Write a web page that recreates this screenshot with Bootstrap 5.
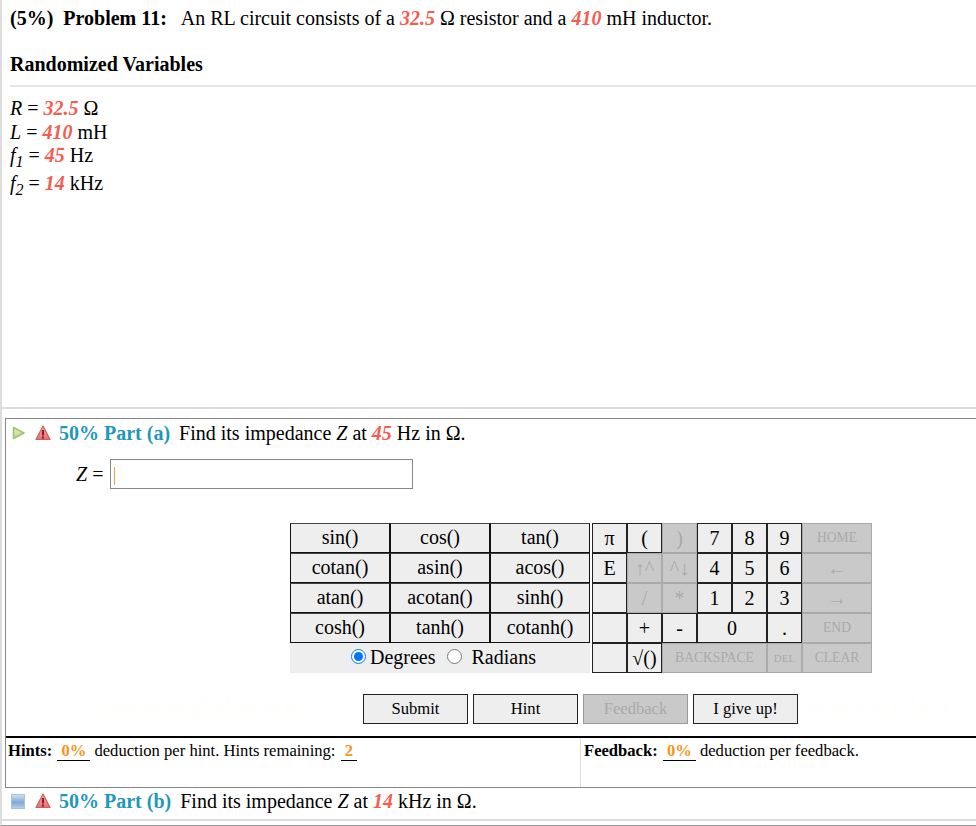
<!DOCTYPE html>
<html lang="en">
<head>
<meta charset="utf-8">
<title>Problem 11</title>
<link rel="stylesheet" href="https://cdn.jsdelivr.net/npm/bootstrap@5.3.0/dist/css/bootstrap.min.css">
<style>
html,body{height:826px;overflow:hidden;background:#fff}
body{font-family:"Liberation Serif","Times New Roman",serif;color:#000;font-size:20px;line-height:1.15}
.sheet{width:976px;height:826px;border-left:2px solid #ddd;border-bottom:1px solid #999;display:flex;flex-direction:column}
.prob{height:409px;border-bottom:2px solid #ddd;padding:6px 0 0 8px;flex:none}
.qline{font-size:20px;line-height:24px}
.qline b{margin-right:5px}
.qline b+b{margin-right:10px}
.rv{color:#f65c50;font-weight:bold;font-style:italic}
.vhead{font-weight:bold;font-size:20px;line-height:24px;margin-top:22px;padding-bottom:9px;border-bottom:2px solid #e6e6e6}
.vars{margin-top:9px;font-size:20px}
.vline{height:24px;line-height:24px;white-space:nowrap}
.vline.mid{height:23px;line-height:23px}
.vline.tall{height:32px;line-height:32px}
.vline sub{font-size:16px;font-style:italic;bottom:-.3em;margin-left:0}
.part{margin:9px 0 0 3px;border:1px solid #888;border-right:0;height:370px;flex:none;display:flex;flex-direction:column}
.phead{display:flex;align-items:center;height:28px;padding-left:6px;white-space:nowrap}
.phead svg{flex:none}
.ico1{margin-right:10px}
.ptitle{color:#1f98bb;font-weight:bold;margin:0 9px 0 8px}
.ansrow{display:flex;align-items:center;margin-top:12px;height:30px;padding-left:70px}
.anslabel{margin-right:7px}
.answrap{position:relative}
.ansbox{display:block;width:303px;height:30px;border:1px solid #888;background:#fff;padding:0;border-radius:0}
.caret-bar{position:absolute;left:4px;top:8px;width:1px;height:18px;background:#f0a050}
.calc{display:flex;margin:34px 0 0 284px;gap:2px}
.fnpad{display:grid;grid-template-columns:repeat(3,100px);grid-auto-rows:30px;background:#eee}
.numpad{display:grid;grid-template-columns:repeat(6,35px) 70px;grid-auto-rows:30px}
.key{display:flex;align-items:center;justify-content:center;background:#eee;border:1px solid #222;margin:0;padding:0;color:#000;font-size:20px;line-height:1;border-radius:0;white-space:nowrap}
.fnpad .key{border-color:#444 #111 #111 #111;padding-bottom:2px}
.key.off{background:#c9c9c9;border-color:#aaa;color:#aaa}
.key.sm{font-size:13.6px}
.key.xs{font-size:11px}
.key.w2{grid-column:span 2}
.key.w3{grid-column:span 3}
.radios{grid-column:span 3;display:flex;align-items:center;padding:0 0 2px 61px;font-size:20px}
.radios input{margin:0 4px 2px 0;width:15px;height:15px;flex:none}
.radios #rad{margin-left:11px;margin-right:10px}
.actions{display:flex;gap:5px;margin:21px 0 0 357px;position:relative}
.actbtn{width:105px;height:30px;background:#eee;border:1px solid #222;font-size:16.6px;padding:0;line-height:1;border-radius:0;color:#000}
.actbtn.off{background:#c9c9c9;border-color:#999;color:#aaa}
.ghost{position:absolute;top:-4px;font-size:27px;line-height:30px;color:#fefefa;white-space:nowrap}
.ghost.a{right:100%;margin-right:60px}
.ghost.b{left:445px;font-size:24px}
.infobar{margin-top:12px;border-top:2px solid #000;flex:1;display:flex;font-size:16.6px;line-height:20px}
.infocol{padding:3px 0 0 2px}
.infocol.l{width:575px;border-right:1px solid #ddd}
.infocol.r{padding-left:3px}
.dash{display:inline-block;color:#f7941d;font-weight:bold;border-bottom:1px solid #000;padding:0 4px;margin:0 0 0 1px;line-height:19px}
.phead.b{height:26px;margin:0 0 0 9px;padding-left:0;flex:none}
.foot{margin-top:5px;border-top:2px solid #ddd;flex:none}
</style>
</head>
<body>
<div class="sheet">
  <section class="prob">
    <div class="qline"><b>(5%)</b> <b>Problem 11:</b> An RL circuit consists of a <span class="rv">32.5</span> Ω resistor and a <span class="rv">410</span> mH inductor.</div>
    <div class="vhead">Randomized Variables</div>
    <div class="vars">
      <div class="vline"><i>R</i> = <span class="rv">32.5</span> Ω</div>
      <div class="vline"><i>L</i> = <span class="rv">410</span> mH</div>
      <div class="vline mid"><i>f</i><sub>1</sub> = <span class="rv">45</span> Hz</div>
      <div class="vline tall"><i>f</i><sub>2</sub> = <span class="rv">14</span> kHz</div>
    </div>
  </section>

  <section class="part">
    <div class="phead">
      <svg class="ico1" width="13" height="14" viewBox="0 0 13 14" aria-hidden="true"><defs><linearGradient id="g1" x1="0" y1="0" x2="0" y2="1"><stop offset="0" stop-color="#e6f0c4"/><stop offset="1" stop-color="#b4d68a"/></linearGradient></defs><path d="M1.5 1.5 L12 7 L1.5 12.5 Z" fill="url(#g1)" stroke="#a3c070" stroke-width="1.6" stroke-linejoin="round"/></svg>
      <svg width="16" height="16" viewBox="0 0 16 16" aria-hidden="true"><defs><linearGradient id="w1" x1="0" y1="0" x2="0" y2="1"><stop offset="0" stop-color="#f9b4b4"/><stop offset="1" stop-color="#ec6c6c"/></linearGradient></defs><path d="M8 1 L15 14.5 L1 14.5 Z" fill="url(#w1)" stroke="#cf5c5c" stroke-width="1.2" stroke-linejoin="round"/><rect x="7" y="5" width="2" height="5.5" fill="#8a1c1c"/><rect x="7" y="11.5" width="2" height="2" fill="#8a1c1c"/></svg>
      <span class="ptitle">50% Part (a)</span>
      <span>Find its impedance <i>Z</i> at <span class="rv">45</span> Hz in Ω.</span>
    </div>
    <div class="ansrow">
      <span class="anslabel"><i>Z</i> =</span>
      <div class="answrap"><input class="ansbox" type="text" aria-label="Z"><span class="caret-bar"></span></div>
    </div>
    <div class="calc">
      <div class="fnpad">
        <button class="key">sin()</button><button class="key">cos()</button><button class="key">tan()</button>
        <button class="key">cotan()</button><button class="key">asin()</button><button class="key">acos()</button>
        <button class="key">atan()</button><button class="key">acotan()</button><button class="key">sinh()</button>
        <button class="key">cosh()</button><button class="key">tanh()</button><button class="key">cotanh()</button>
        <div class="radios"><input type="radio" name="ang" id="deg" checked><label for="deg">Degrees</label><input type="radio" name="ang" id="rad"><label for="rad">Radians</label></div>
      </div>
      <div class="numpad">
        <button class="key">π</button><button class="key">(</button><button class="key off">)</button><button class="key">7</button><button class="key">8</button><button class="key">9</button><button class="key off sm">HOME</button>
        <button class="key">E</button><button class="key off">↑^</button><button class="key off">^↓</button><button class="key">4</button><button class="key">5</button><button class="key">6</button><button class="key off">←</button>
        <button class="key"></button><button class="key off">/</button><button class="key off">*</button><button class="key">1</button><button class="key">2</button><button class="key">3</button><button class="key off">→</button>
        <button class="key"></button><button class="key">+</button><button class="key">-</button><button class="key w2">0</button><button class="key">.</button><button class="key off sm">END</button>
        <button class="key"></button><button class="key">√()</button><button class="key off sm w3">BACKSPACE</button><button class="key off xs">DEL</button><button class="key off sm">CLEAR</button>
      </div>
    </div>
    <div class="actions">
      <span class="ghost a">mweener@sfsu.edu</span>
      <button class="actbtn">Submit</button><button class="actbtn">Hint</button><button class="actbtn off">Feedback</button><button class="actbtn">I give up!</button>
      <span class="ghost b">6C65-3D-24-47</span>
    </div>
    <div class="infobar">
      <div class="infocol l"><b>Hints:</b> <span class="dash">0%</span> deduction per hint. Hints remaining: <span class="dash">2</span></div>
      <div class="infocol r"><b>Feedback:</b> <span class="dash">0%</span> deduction per feedback.</div>
    </div>
  </section>

  <div class="phead b">
    <svg class="ico1" width="14" height="15" viewBox="0 0 14 15" aria-hidden="true"><defs><linearGradient id="b1" x1="0" y1="0" x2="0" y2="1"><stop offset="0" stop-color="#d6e4f2"/><stop offset=".55" stop-color="#7fa8d6"/><stop offset="1" stop-color="#bcd0e6"/></linearGradient></defs><rect x=".5" y=".5" width="13" height="14" fill="url(#b1)" stroke="#a9c3dc"/></svg>
    <svg width="16" height="16" viewBox="0 0 16 16" aria-hidden="true"><path d="M8 1 L15 14.5 L1 14.5 Z" fill="url(#w1)" stroke="#cf5c5c" stroke-width="1.2" stroke-linejoin="round"/><rect x="7" y="5" width="2" height="5.5" fill="#8a1c1c"/><rect x="7" y="11.5" width="2" height="2" fill="#8a1c1c"/></svg>
    <span class="ptitle">50% Part (b)</span>
    <span>Find its impedance <i>Z</i> at <span class="rv">14</span> kHz in Ω.</span>
  </div>
  <div class="foot"></div>
</div>
<script src="https://cdn.jsdelivr.net/npm/bootstrap@5.3.0/dist/js/bootstrap.bundle.min.js"></script>
</body>
</html>
